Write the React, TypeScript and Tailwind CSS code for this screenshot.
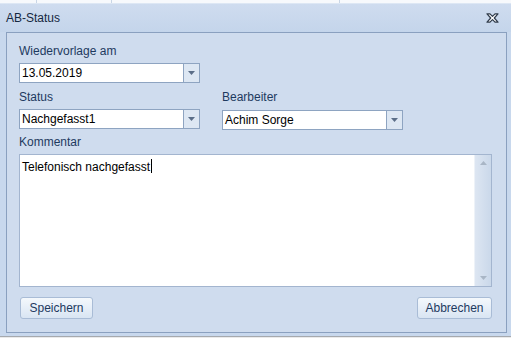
import { useState } from "react";

const font = { fontFamily: '"Liberation Sans", Arial, sans-serif' };

function Arrow({ up = false, className = "" }: { up?: boolean; className?: string }) {
  return (
    <svg width="7" height="4" viewBox="0 0 7 4" className={className}>
      {up ? <path d="M0 4 L3.5 0 L7 4 Z" /> : <path d="M0 0 L7 0 L3.5 4 Z" />}
    </svg>
  );
}

function ComboBox({ value, width }: { value: string; width: string }) {
  return (
    <div className={`flex h-[20px] border border-[#8ea4c1] bg-white ${width}`}>
      <div className="flex flex-1 items-center pl-[2px] text-[12px] text-black">{value}</div>
      <div className="flex w-[16px] items-center justify-center border-l border-[#8ea4c1] bg-[#dde7f3]">
        <Arrow className="fill-[#5b6e88]" />
      </div>
    </div>
  );
}

function Label({ children }: { children: string }) {
  return <div className="h-[14px] text-[12px] leading-[14px] text-[#1e3a5f]">{children}</div>;
}

function Button({ children, width }: { children: string; width: string }) {
  return (
    <button
      className={`h-[22px] ${width} rounded-[3px] border border-[#a9bcd6] bg-gradient-to-b from-[#f4f8fc] to-[#d9e5f3] text-[12px] text-[#1e3a5f]`}
    >
      {children}
    </button>
  );
}

export default function App() {
  const [comment] = useState("Telefonisch nachgefasst");

  return (
    <div style={font} className="flex h-[338px] w-[511px] flex-col overflow-hidden bg-[#eaeaea]">
      {/* strip of the window behind */}
      <div className="flex h-[3px] bg-[#f7f9fc]">
        <div className="w-[37px] border-r border-[#c9d6e6]" />
        <div className="w-[75px] border-r border-[#c9d6e6]" />
        <div className="w-[228px] border-r border-[#c9d6e6]" />
      </div>

      {/* dialog frame */}
      <div className="flex h-[333px] flex-col bg-[#c8d8ed]">
        {/* title bar */}
        <div className="flex h-[29px] items-center justify-between border-t border-[#dde7f4] bg-gradient-to-b from-[#cfdcef] to-[#c4d5eb] pl-[6px] pr-[12px]">
          <span className="text-[12px] text-[#15283f]">AB-Status</span>
          <svg width="13" height="10" viewBox="0 0 13 10">
            <path
              d="M1 0.8 H4 L6.5 3.3 L9 0.8 H12 L8.3 5 L12 9.2 H9 L6.5 6.7 L4 9.2 H1 L4.7 5 Z"
              fill="#ffffff"
              stroke="#2f3b4b"
              strokeWidth="1.2"
              strokeLinejoin="round"
            />
          </svg>
        </div>

        {/* content panel */}
        <div className="ml-[6px] mr-[4px] flex h-[301px] flex-col border border-[#8aa0bf] bg-[#cfdcee] pl-[12px] pr-[14px]">
          <div className="mt-[11px]">
            <Label>Wiedervorlage am</Label>
          </div>
          <div className="mt-[5px]">
            <ComboBox value="13.05.2019" width="w-[181px]" />
          </div>

          <div className="mt-[7px] flex gap-[22px]">
            <div className="flex flex-col">
              <Label>Status</Label>
              <div className="mt-[5px]">
                <ComboBox value="Nachgefasst1" width="w-[181px]" />
              </div>
            </div>
            <div className="flex flex-col">
              <Label>Bearbeiter</Label>
              <div className="mt-[6px]">
                <ComboBox value="Achim Sorge" width="w-[181px]" />
              </div>
            </div>
          </div>

          <div className="mt-[5px]">
            <Label>Kommentar</Label>
          </div>
          <div className="mt-[5px] flex h-[133px] border border-[#a3b5cf] bg-white">
            <div className="flex-1 pl-[2px] pt-[2px] text-[12px] leading-[14px] text-black">
              {comment}
              <span className="ml-px inline-block h-[14px] w-px translate-y-[2px] bg-black" />
            </div>
            <div className="flex w-[17px] flex-col items-center justify-between border-l border-[#edf2f8] bg-gradient-to-r from-[#dde6f2] to-[#cad8ea] py-[6px]">
              <Arrow up className="fill-[#a9b6c6]" />
              <Arrow className="fill-[#a9b6c6]" />
            </div>
          </div>

          <div className="mt-[10px] flex justify-between pl-px">
            <Button width="w-[73px]">Speichern</Button>
            <Button width="w-[75px]">Abbrechen</Button>
          </div>
        </div>
      </div>
      <div className="h-px bg-[#a5a9ae]" />
    </div>
  );
}
